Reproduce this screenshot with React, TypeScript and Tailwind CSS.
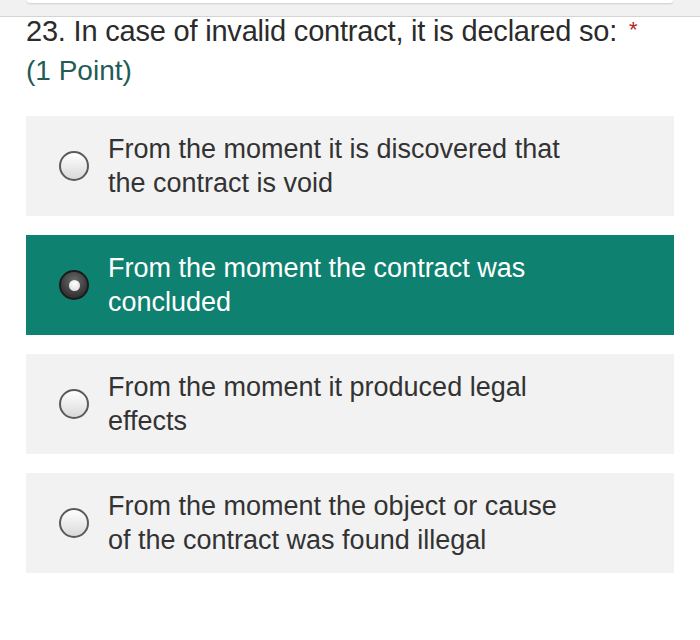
const options = [
  ['From the moment it is discovered that', 'the contract is void'],
  ['From the moment the contract was', 'concluded'],
  ['From the moment it produced legal', 'effects'],
  ['From the moment the object or cause', 'of the contract was found illegal'],
];

function Radio({ checked }: { checked: boolean }) {
  if (checked) {
    return (
      <span className="flex h-[30px] w-[30px] shrink-0 items-center justify-center rounded-full border-2 border-[#1b1b1b] bg-[radial-gradient(circle_at_50%_35%,#6b6b6b,#1e1e1e)]">
        <span className="h-[11px] w-[11px] rounded-full bg-[radial-gradient(circle_at_50%_35%,#ffffff,#d6d6d6)]" />
      </span>
    );
  }
  return (
    <span className="h-[30px] w-[30px] shrink-0 rounded-full border-2 border-[#5a5a5a] bg-[linear-gradient(180deg,#ffffff,#d9d9d9)]" />
  );
}

export default function App() {
  const selected = 1;
  return (
    <div className="h-[640px] w-[700px] bg-white font-['Liberation_Sans',Arial,sans-serif]">
      <div className="h-[17px] border-b border-[#d4d4d4] bg-[#f1f1f1]">
        <div className="mx-[27px] h-[3px] rounded-b-[4px] bg-white shadow-[0_1px_2px_rgba(0,0,0,0.15)]" />
      </div>
      <div className="px-[26px]">
        <h1 className="text-[29px] leading-[28px] tracking-[-0.2px] text-[#2b2b2b]">
          23. In case of invalid contract, it is declared so:{' '}
          <span className="relative -top-[4px] ml-1 text-[22px] text-[#b3261e]">*</span>
        </h1>
        <p className="mt-[6px] text-[28px] leading-[34px] text-[#1f5d56]">(1 Point)</p>
        <div className="mt-[28px] flex flex-col gap-[19px]">
          {options.map((lines, i) => {
            const on = i === selected;
            return (
              <div
                key={i}
                className={`flex h-[100px] items-center gap-[19px] pl-[33px] ${on ? 'bg-[#0f8170] text-white' : 'bg-[#f2f2f2] text-[#333333]'}`}
              >
                <Radio checked={on} />
                <div className="text-[27px] leading-[34px]">
                  {lines.map((l) => (
                    <div key={l}>{l}</div>
                  ))}
                </div>
              </div>
            );
          })}
        </div>
      </div>
    </div>
  );
}
